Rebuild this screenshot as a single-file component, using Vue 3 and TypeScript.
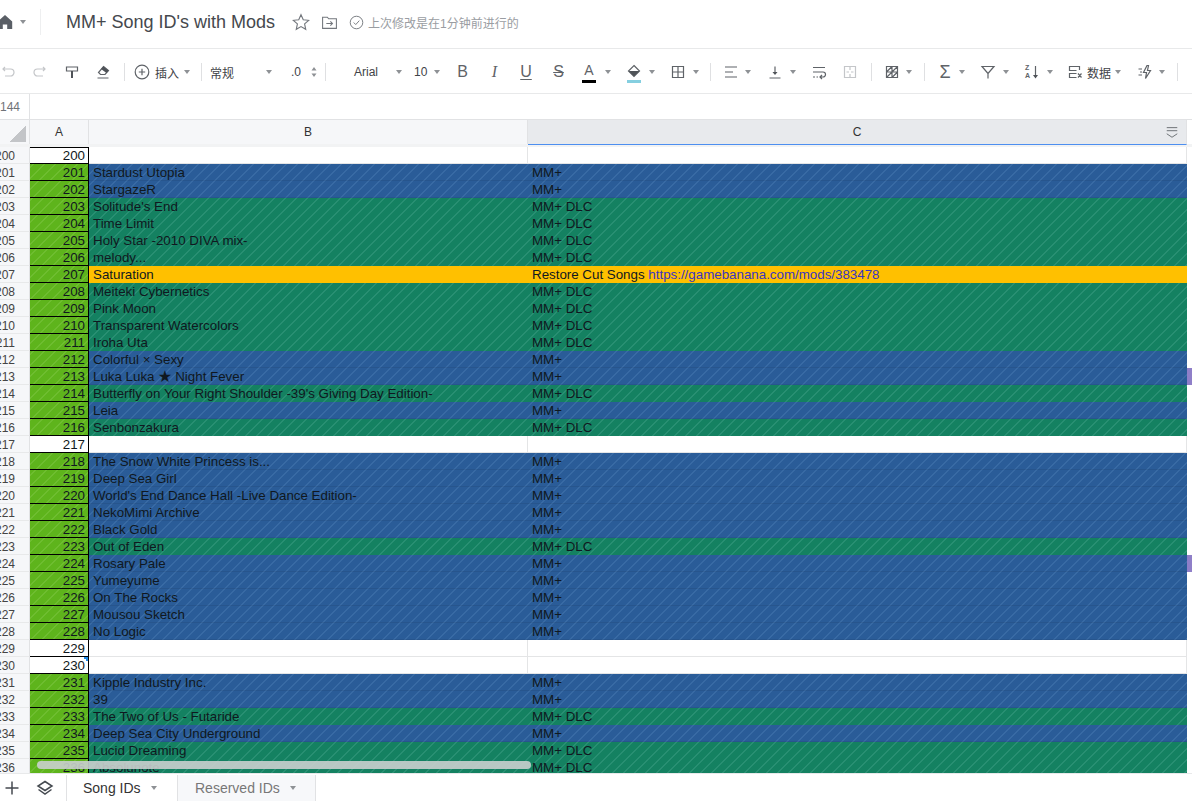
<script setup lang="ts">
type Kind = 'blue' | 'green' | 'gold' | 'empty'

interface Row {
  id: number
  name: string
  kind: Kind
  pack: string
  link?: string
  note?: boolean
  mark?: boolean
}

interface Tool {
  w: number
  g?: number
  sep?: boolean
  caret?: boolean
  label?: string
  left?: boolean
  glyph?: string
  cls?: string
  icon?: string
  solid?: string
  off?: boolean
  bar?: string
  az?: boolean
}

const names: [string, Kind][] = [
  ['', 'empty'],
  ['Stardust Utopia', 'blue'],
  ['StargazeR', 'blue'],
  ["Solitude's End", 'green'],
  ['Time Limit', 'green'],
  ['Holy Star -2010 DIVA mix-', 'green'],
  ['melody...', 'green'],
  ['Saturation', 'gold'],
  ['Meiteki Cybernetics', 'green'],
  ['Pink Moon', 'green'],
  ['Transparent Watercolors', 'green'],
  ['Iroha Uta', 'green'],
  ['Colorful × Sexy', 'blue'],
  ['Luka Luka ★ Night Fever', 'blue'],
  ["Butterfly on Your Right Shoulder -39's Giving Day Edition-", 'green'],
  ['Leia', 'blue'],
  ['Senbonzakura', 'green'],
  ['', 'empty'],
  ['The Snow White Princess is...', 'blue'],
  ['Deep Sea Girl', 'blue'],
  ["World's End Dance Hall -Live Dance Edition-", 'blue'],
  ['NekoMimi Archive', 'blue'],
  ['Black Gold', 'blue'],
  ['Out of Eden', 'green'],
  ['Rosary Pale', 'blue'],
  ['Yumeyume', 'blue'],
  ['On The Rocks', 'blue'],
  ['Mousou Sketch', 'blue'],
  ['No Logic', 'blue'],
  ['', 'empty'],
  ['', 'empty'],
  ['Kipple Industry Inc.', 'blue'],
  ['39', 'blue'],
  ['The Two of Us - Futaride', 'green'],
  ['Deep Sea City Underground', 'blue'],
  ['Lucid Dreaming', 'green'],
  ['Absolunote', 'green'],
]

const rows: Row[] = names.map(([name, kind], i) => {
  const id = 200 + i
  const packs: Record<Kind, string> = { blue: 'MM+', green: 'MM+ DLC', gold: 'Restore Cut Songs ', empty: '' }
  return {
    id,
    name,
    kind,
    pack: packs[kind],
    link: kind === 'gold' ? 'https://gamebanana.com/mods/383478' : undefined,
    note: id === 230,
    mark: id === 213 || id === 224,
  }
})

const tools: Tool[] = [
  { w: 32, off: true, icon: 'M5 3 3 5l2 2M3 5h7.500a3.500 3.500 0 0 1 0 7H5' },
  { w: 32, off: true, icon: 'M11 3l2 2-2 2M13 5H5.500a3.500 3.500 0 0 0 0 7H11' },
  { w: 31, icon: 'M2.500 3h11v4h-11z', solid: 'M7 7h2v7H7z' },
  { w: 32, icon: 'M2.500 14h11M8.500 2.500 13.500 6.500 10 10.500H5.500L3.500 8.500z', solid: 'M8.500 2.500 13.500 6.500 11.500 9 6 5z' },
  { w: 10, sep: true },
  { w: 26, icon: 'M8 1.200a6.800 6.800 0 1 0 0 13.600A6.800 6.800 0 0 0 8 1.200zM8 4.800v6.400M4.800 8h6.400' },
  { w: 24, label: '插入', left: true },
  { w: 16, caret: true },
  { w: 12, sep: true },
  { w: 52, label: '常规', left: true, g: 3 },
  { w: 14, caret: true },
  { w: 24, g: 8, label: '.0' },
  { w: 12, solid: 'M8 3 10.500 6.500h-5zM8 13 5.500 9.500h5z', cls: 'spin' },
  { w: 10, sep: true },
  { w: 26, g: 24, label: 'Arial', left: true },
  { w: 14, g: 12, caret: true },
  { w: 14, g: 8, label: '10', left: true },
  { w: 18, caret: true },
  { w: 33, glyph: 'B', cls: 'g-b' },
  { w: 31, glyph: 'I', cls: 'g-i' },
  { w: 32, glyph: 'U', cls: 'g-u' },
  { w: 33, glyph: 'S', cls: 'g-s' },
  { w: 28, glyph: 'A', cls: 'g-a', bar: 'black' },
  { w: 10, caret: true },
  { w: 20, g: 11, icon: 'M8 1.500 13.500 7 8 12.500 2.500 7z', solid: 'M2.500 7h11L8 12.500z', bar: 'teal' },
  { w: 16, caret: true },
  { w: 28, g: 4, icon: 'M2.500 2.500h11v11h-11zM8 2.500v11M2.500 8h11' },
  { w: 8, caret: true },
  { w: 20, sep: true },
  { w: 22, icon: 'M2 3h12M2 8h8M2 13h12' },
  { w: 12, caret: true },
  { w: 24, g: 9, icon: 'M2.500 14h11M8 2.500v7', solid: 'M5.500 8h5L8 11z' },
  { w: 12, caret: true },
  { w: 24, g: 8, icon: 'M2 3.500h12M2 8h10a2.500 2.500 0 0 1 0 5H9M11 11 9 13l2 2M2 13h2M5.500 13h1.500' },
  { w: 24, g: 7, off: true, icon: 'M2.500 2.500h11v11h-11zM8 2.500v3.500M8 10v3.500M4.500 8h2.500M9 8h2.500' },
  { w: 18, sep: true },
  { w: 23, icon: 'M2.500 2.500h11v11h-11zM2.500 8 8 2.500M2.500 13.500l11-11M8 13.500 13.500 8M8 2.500v11M2.500 8h11' },
  { w: 12, caret: true },
  { w: 18, sep: true },
  { w: 24, glyph: 'Σ', cls: 'g-sum' },
  { w: 10, caret: true },
  { w: 24, g: 9, icon: 'M2 2.500h12L8 9.500zM8 9.500v5' },
  { w: 12, caret: true },
  { w: 24, g: 8, az: true, icon: 'M11.500 2v11', solid: 'M9 11h5l-2.500 3.500z' },
  { w: 12, caret: true },
  { w: 24, g: 7, icon: 'M12.500 6V2.500H2.500v4h7M9.500 9.500h-7v4h7M11 9.500l3.500 4M14.500 9.500l-3.500 4' },
  { w: 23, label: '数据', left: true },
  { w: 16, caret: true },
  { w: 24, g: 7, icon: 'M10 1.500 6.500 8.500h3l-1 6 5-8h-3l1-5zM1.500 5h3.500M3 8h2M1.500 11h3.500' },
  { w: 10, caret: true },
  { w: 20, sep: true },
]

// width + optional gap come straight from the tool list
function toolStyle(t: Tool) {
  return { width: `${t.w}px`, marginLeft: t.g ? `${t.g}px` : undefined }
}
</script>

<template>
  <div class="sheet">
    <header class="titlebar">
      <svg class="home" viewBox="0 0 16 16" width="16" height="16">
        <path d="M8 1 .8 7.500V15h5v-4.500h4.400V15h5V7.500z" fill="#5a5f66" />
      </svg>
      <span class="caret home-caret"></span>
      <span class="title-sep"></span>
      <h1 class="doc-name">MM+ Song ID's with Mods</h1>
      <svg class="title-icon star" viewBox="0 0 16 16" width="18" height="18">
        <path d="M8 1.500 10 6l4.800.5-3.600 3.200 1 4.800L8 12.100l-4.200 2.400 1-4.800L1.200 6.500 6 6z" />
      </svg>
      <svg class="title-icon move" viewBox="0 0 16 16" width="17" height="17">
        <path d="M1.500 3h4.500l1.200 1.500h7.300v9h-13zM5 9h5.500M8.800 7l2 2-2 2" />
      </svg>
      <svg class="title-icon saved" viewBox="0 0 16 16" width="15" height="15">
        <path d="M8 1.300a6.700 6.700 0 1 0 0 13.400A6.700 6.700 0 0 0 8 1.300zM5 8l2.200 2.200L11 6" />
      </svg>
      <span class="saved-text">上次修改是在1分钟前进行的</span>
    </header>

    <div class="toolbar">
      <template v-for="(t, i) in tools" :key="i">
        <span class="tool" :class="{ left: t.left }" :style="toolStyle(t)">
          <i v-if="t.sep" class="tool-sep"></i>
          <span v-else-if="t.caret" class="caret"></span>
          <span v-else-if="t.label" class="tool-label">{{ t.label }}</span>
          <span v-else class="tool-icon">
            <span v-if="t.glyph" class="glyph" :class="t.cls">{{ t.glyph }}</span>
            <svg v-else viewBox="0 0 16 16" width="16" height="16" :class="[{ off: t.off }, t.cls]">
              <path v-if="t.icon" :d="t.icon" />
              <path v-if="t.solid" class="solid" :d="t.solid" />
            </svg>
            <span v-if="t.az" class="az"><b>Z</b><b>A</b></span>
            <i v-if="t.bar" class="color-bar" :class="t.bar"></i>
          </span>
        </span>
      </template>
    </div>

    <div class="formula">
      <div class="cell-ref">144</div>
    </div>

    <div class="col-head">
      <div class="corner"><i class="corner-mark"></i></div>
      <div class="col a">A</div>
      <div class="col b">B</div>
      <div class="col c">
        C
        <svg class="col-filter" viewBox="0 0 16 16" width="14" height="14">
          <path d="M2 3h12M2 6.500h12M2 10l6 4 6-4" />
        </svg>
      </div>
      <div class="col-tail"></div>
    </div>

    <div class="grid">
      <div v-for="r in rows" :key="r.id" class="row" :class="r.kind">
        <div class="row-num"><span>{{ r.id }}</span></div>
        <div class="cell a">
          {{ r.id }}
          <i v-if="r.note" class="note"></i>
        </div>
        <div class="cell b">{{ r.name }}</div>
        <div class="cell c">{{ r.pack }}<span v-if="r.link" class="link">{{ r.link }}</span></div>
        <div class="tail"><i v-if="r.mark" class="mark"></i></div>
      </div>
      <div class="hscroll"></div>
    </div>

    <footer class="tabs">
      <svg class="tab-icon plus" viewBox="0 0 16 16" width="16" height="16">
        <path d="M8 1.500v13M1.500 8h13" />
      </svg>
      <svg class="tab-icon layers" viewBox="0 0 18 18" width="18" height="18">
        <path d="M9 2.500 16 7l-7 4.500L2 7zM2.500 10.500 9 15l6.500-4.500" />
      </svg>
      <div class="tab active">Song IDs<span class="caret"></span></div>
      <div class="tab">Reserved IDs<span class="caret"></span></div>
    </footer>
  </div>
</template>

<style>
html,
body {
  margin: 0;
  background: #fff;
  overflow: hidden;
}
</style>

<style scoped>
.sheet {
  display: flex;
  flex-direction: column;
  width: 1192px;
  height: 801px;
  overflow: hidden;
  font-family: "Liberation Sans", Arial, "Noto Sans CJK SC", sans-serif;
  color: #111;
  background: #fff;
}

.titlebar {
  display: flex;
  flex: none;
  align-items: center;
  height: 49px;
  border-bottom: 1px solid #e8e9ea;
  padding-bottom: 4px;
  box-sizing: border-box;
}

.home {
  margin-left: -3px;
}

.caret {
  display: inline-block;
  width: 0;
  height: 0;
  border-top: 4px solid #8e9195;
  border-left: 3px solid transparent;
  border-right: 3px solid transparent;
}

.home-caret {
  margin-left: 7px;
}

.title-sep {
  width: 1px;
  height: 26px;
  margin-left: 14px;
  background: #eeeff0;
}

.doc-name {
  margin: 0 0 0 25px;
  font-size: 18px;
  font-weight: 400;
  color: #45484d;
  white-space: nowrap;
}

.title-icon {
  flex: none;
  fill: none;
  stroke: #73777d;
  stroke-width: 1;
}

.star {
  margin-left: 17px;
}

.move {
  margin-left: 11px;
}

.saved {
  margin-left: 11px;
}

.saved-text {
  margin-left: 4px;
  font-size: 12px;
  color: #9a9da2;
  white-space: nowrap;
}

.toolbar {
  display: flex;
  flex: none;
  align-items: center;
  height: 45px;
  padding-top: 2px;
  margin-left: -8px;
  border-bottom: 1px solid #e8e9ea;
  box-sizing: border-box;
}

.tool {
  display: flex;
  flex: none;
  align-items: center;
  justify-content: center;
  height: 24px;
}

.tool.left {
  justify-content: flex-start;
}

.tool-sep {
  width: 1px;
  height: 18px;
  background: #dfe0e2;
}

.tool-label {
  font-size: 12px;
  color: #3f4348;
  white-space: nowrap;
}

.tool-icon {
  position: relative;
  display: block;
  width: 16px;
  height: 16px;
}

.tool-icon svg {
  display: block;
  fill: none;
  stroke: #5f6368;
  stroke-width: 1.200;
}

.tool-icon svg .solid {
  fill: #4f5358;
  stroke: none;
}

.tool-icon svg.spin .solid {
  fill: #8e9195;
}

.tool-icon svg.off {
  stroke: #c4c6c9;
}

.glyph {
  display: block;
  width: 16px;
  font-size: 16px;
  line-height: 16px;
  text-align: center;
  color: #5f6368;
}

.g-i {
  font-family: "Liberation Serif", serif;
  font-style: italic;
}

.g-u {
  text-decoration: underline;
  text-underline-offset: 2px;
}

.g-s {
  text-decoration: line-through;
}

.g-a {
  font-size: 14px;
  line-height: 13px;
}

.g-sum {
  font-size: 18px;
}

.az {
  position: absolute;
  top: 0;
  left: 1px;
  display: flex;
  flex-direction: column;
  font-size: 7px;
  line-height: 8px;
  color: #5f6368;
}

.color-bar {
  position: absolute;
  left: 1px;
  right: 1px;
  bottom: -3px;
  height: 3px;
}

.color-bar.black {
  background: #000;
}

.color-bar.teal {
  background: #85cfe0;
}

.formula {
  flex: none;
  height: 26px;
  border-bottom: 1px solid #e1e2e4;
  box-sizing: border-box;
}

.cell-ref {
  width: 30px;
  height: 100%;
  box-sizing: border-box;
  border-right: 1px solid #e1e2e4;
  font-size: 12px;
  line-height: 26px;
  color: #6f7378;
}

.col-head {
  display: flex;
  flex: none;
  height: 27px;
  background: #f6f7f9;
  border-bottom: 3px solid #f2f3f4;
  box-sizing: border-box;
  font-size: 12px;
  color: #333;
}

.corner {
  position: relative;
  flex: none;
  width: 30px;
  border-right: 1px solid #e1e2e4;
  box-sizing: border-box;
}

.corner-mark {
  position: absolute;
  right: 3px;
  bottom: 2px;
  width: 16px;
  height: 16px;
  background: linear-gradient(135deg, transparent 50%, #c3c5c8 50%);
}

.col {
  flex: none;
  box-sizing: border-box;
  border-right: 1px solid #e1e2e4;
  line-height: 25px;
  text-align: center;
}

.col.a {
  width: 59px;
}

.col.b {
  width: 439px;
}

.col.c {
  position: relative;
  width: 659px;
  height: 25px;
  background: #e8eaed;
  border-bottom: 1px solid #4d8ff0;
}

.col-filter {
  position: absolute;
  top: 5px;
  right: 7px;
  fill: none;
  stroke: #6b6f74;
  stroke-width: 1.100;
}

.col-tail {
  flex: 1;
  background: #fff;
}

.grid {
  position: relative;
  flex: 1;
  min-height: 0;
  overflow: hidden;
  font-size: 13.330px;
}

.row {
  display: flex;
  height: 17px;
  line-height: 18px;
}

.row-num {
  display: flex;
  flex: none;
  justify-content: flex-end;
  width: 30px;
  padding-right: 14px;
  box-sizing: border-box;
  overflow: hidden;
  background: #f6f7f9;
  border-right: 1px solid #e1e2e4;
  border-bottom: 1px solid #e8e9ea;
  font-size: 12px;
  color: #444;
}

.cell {
  flex: none;
  box-sizing: border-box;
  white-space: nowrap;
  overflow: hidden;
  border-bottom: 1px solid transparent;
  color: #101820;
}

.cell.a {
  position: relative;
  width: 59px;
  padding-right: 3px;
  border-bottom-color: #000;
  border-right: 1px solid #000;
  font-size: 13.330px;
  text-align: right;
  background-color: #5eb41c;
  background-image: repeating-linear-gradient(135deg, transparent 0 6.400px, #6ebd30 6.400px 7.780px);
  background-attachment: fixed;
}

.row:first-child .cell.a {
  box-shadow: inset 0 1px 0 #000;
}

.cell.b {
  width: 439px;
  padding-left: 4px;
  line-height: 17px;
}

.cell.c {
  width: 659px;
  padding-left: 4px;
  line-height: 17px;
}

.tail {
  flex: 1;
  background: #fff;
}

.row.blue .cell.b,
.row.blue .cell.c {
  background-color: #2a5c98;
  background-image: repeating-linear-gradient(135deg, transparent 0 6.400px, #386aa4 6.400px 7.780px);
  background-attachment: fixed;
  border-bottom-color: rgba(0, 0, 0, 0.07);
}

.row.green .cell.b,
.row.green .cell.c {
  background-color: #148161;
  background-image: repeating-linear-gradient(135deg, transparent 0 6.400px, #288f72 6.400px 7.780px);
  background-attachment: fixed;
}

.row.gold .cell.b,
.row.gold .cell.c {
  background: #ffc000;
}

.row.empty .cell.a {
  background: #fff;
}

.row.empty .cell.b,
.row.empty .cell.c {
  border-bottom-color: #e4e5e6;
  border-right: 1px solid #e4e5e6;
}

.link {
  color: #3a35c0;
}

.note {
  position: absolute;
  top: 0;
  right: 0;
  width: 5px;
  height: 5px;
  background: linear-gradient(45deg, transparent 50%, #1e88e5 50%);
}

.mark {
  display: block;
  height: 17px;
  background: #8f7fc8;
}

.hscroll {
  position: absolute;
  left: 37px;
  top: 614px;
  width: 494px;
  height: 8px;
  border-radius: 4px;
  background: rgba(202, 207, 206, 0.9);
}

.tabs {
  display: flex;
  flex: none;
  align-items: stretch;
  height: 28px;
  border-top: 1px solid #e8e9ea;
  box-sizing: border-box;
  padding-top: 1px;
  font-size: 14px;
}

.tab-icon {
  flex: none;
  align-self: center;
  fill: none;
  stroke: #454a50;
}

.plus {
  margin-left: 4px;
  stroke-width: 1.500;
}

.layers {
  margin-left: 16px;
  stroke-width: 1.500;
}

.tab {
  display: flex;
  flex: none;
  align-items: center;
  width: 138px;
  padding-left: 17px;
  box-sizing: border-box;
  border-right: 1px solid #e1e2e4;
  background: #f7f8fa;
  color: #777;
  white-space: nowrap;
}

.tab.active {
  width: 112px;
  margin-left: 12px;
  padding-left: 16px;
  border-left: 1px solid #e1e2e4;
  background: #fff;
  color: #333;
}

.tab .caret {
  margin-left: 10px;
}
</style>
